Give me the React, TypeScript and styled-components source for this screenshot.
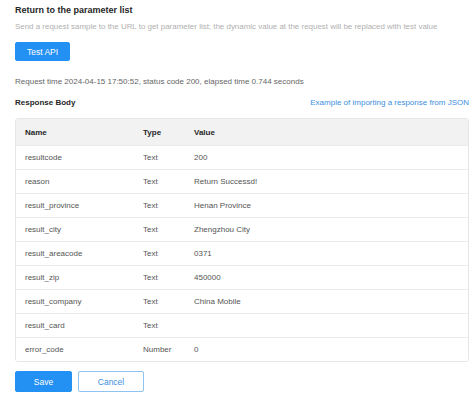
import React from 'react';
import styled, { createGlobalStyle } from 'styled-components';

const GlobalStyle = createGlobalStyle`
  html, body {
    margin: 0;
    padding: 0;
    background: #ffffff;
  }
  body {
    font-family: 'Liberation Sans', Arial, Helvetica, sans-serif;
    -webkit-font-smoothing: antialiased;
  }
`;

const Page = styled.div`
  width: 474px;
  height: 394px;
  box-sizing: border-box;
  padding: 4px 5px 0 15px;
  overflow: hidden;
  display: flex;
  flex-direction: column;
`;

const Title = styled.div`
  font-size: 9px;
  line-height: 12px;
  font-weight: 700;
  color: #262626;
`;

const Hint = styled.div`
  margin-top: 5px;
  font-size: 7.95px;
  line-height: 12px;
  color: #b0b0b0;
  white-space: nowrap;
`;

const Button = styled.button<{ $variant?: 'primary' | 'ghost'; $w: number; $h: number }>`
  box-sizing: border-box;
  width: ${(p) => p.$w}px;
  height: ${(p) => p.$h}px;
  padding: 0;
  border-radius: 2px;
  font-family: inherit;
  font-size: 8.5px;
  cursor: pointer;
  background: ${(p) => (p.$variant === 'ghost' ? '#ffffff' : '#2390f3')};
  color: ${(p) => (p.$variant === 'ghost' ? '#3d8fe0' : '#ffffff')};
  border: 1px solid ${(p) => (p.$variant === 'ghost' ? '#8fc3f2' : '#2390f3')};
`;

const TestRow = styled.div`
  margin-top: 9px;
  display: flex;
`;

const Meta = styled.div`
  margin-top: 15px;
  font-size: 8px;
  line-height: 12px;
  color: #666666;
  white-space: nowrap;
`;

const SectionHead = styled.div`
  margin-top: 9px;
  display: flex;
  justify-content: space-between;
  align-items: center;
  line-height: 12px;
`;

const SectionTitle = styled.div`
  font-size: 8px;
  font-weight: 700;
  color: #262626;
`;

const Link = styled.a`
  font-size: 8px;
  color: #3d8fe0;
  text-decoration: none;
`;

const Table = styled.div`
  margin-top: 9px;
  width: 454px;
  box-sizing: border-box;
  border: 1px solid #e6e6e6;
  border-radius: 3px;
  overflow: hidden;
`;

const Row = styled.div<{ $head?: boolean }>`
  display: grid;
  grid-template-columns: 118px 51px 1fr;
  align-items: center;
  box-sizing: border-box;
  height: ${(p) => (p.$head ? 26 : 24)}px;
  padding-left: 9px;
  font-size: 8px;
  background: ${(p) => (p.$head ? '#f2f2f2' : '#ffffff')};
  color: ${(p) => (p.$head ? '#262626' : '#555555')};
  font-weight: ${(p) => (p.$head ? 700 : 400)};
  & + & {
    border-top: 1px solid #ebebeb;
  }
`;

const Footer = styled.div`
  margin-top: 9px;
  display: flex;
  gap: 6px;
`;

const rows: [string, string, string][] = [
  ['resultcode', 'Text', '200'],
  ['reason', 'Text', 'Return Successd!'],
  ['result_province', 'Text', 'Henan Province'],
  ['result_city', 'Text', 'Zhengzhou City'],
  ['result_areacode', 'Text', '0371'],
  ['result_zip', 'Text', '450000'],
  ['result_company', 'Text', 'China Mobile'],
  ['result_card', 'Text', ''],
  ['error_code', 'Number', '0'],
];

export default function App() {
  return (
    <>
      <GlobalStyle />
      <Page>
        <Title>Return to the parameter list</Title>
        <Hint>
          Send a request sample to the URL to get parameter list; the dynamic value at the request will be
          replaced with test value
        </Hint>
        <TestRow>
          <Button $w={55} $h={19}>Test API</Button>
        </TestRow>
        <Meta>Request time 2024-04-15 17:50:52, status code 200, elapsed time 0.744 seconds</Meta>
        <SectionHead>
          <SectionTitle>Response Body</SectionTitle>
          <Link href="#">Example of importing a response from JSON</Link>
        </SectionHead>
        <Table>
          <Row $head>
            <span>Name</span>
            <span>Type</span>
            <span>Value</span>
          </Row>
          {rows.map(([name, type, value]) => (
            <Row key={name}>
              <span>{name}</span>
              <span>{type}</span>
              <span>{value}</span>
            </Row>
          ))}
        </Table>
        <Footer>
          <Button $w={57} $h={21}>Save</Button>
          <Button $variant="ghost" $w={66} $h={21}>Cancel</Button>
        </Footer>
      </Page>
    </>
  );
}
